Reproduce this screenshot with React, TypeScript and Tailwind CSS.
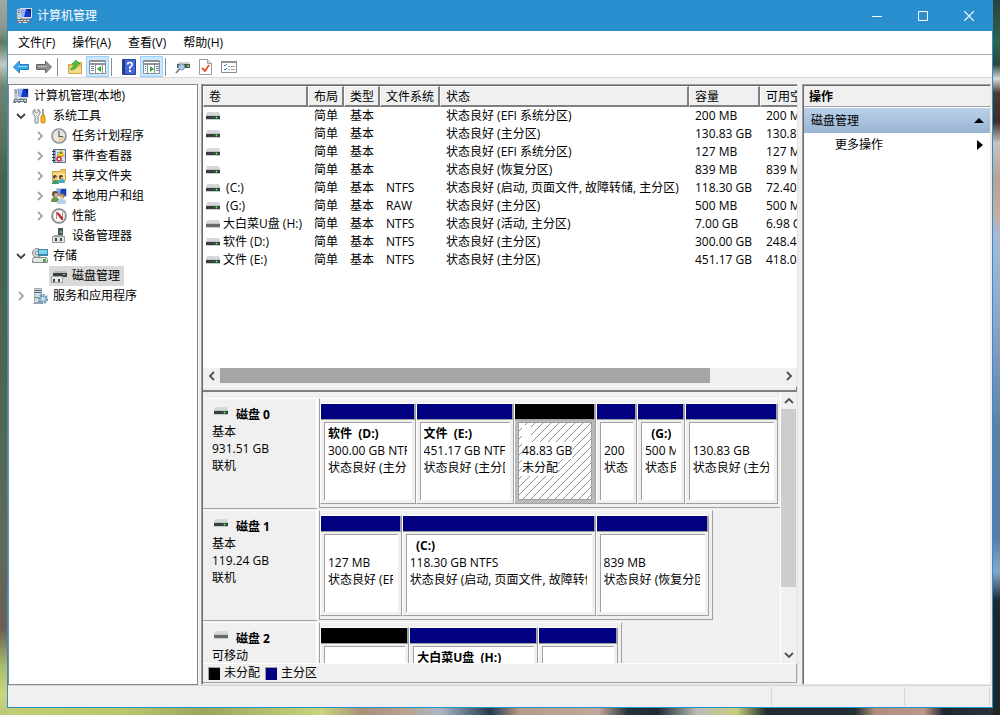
import type { ReactNode } from "react"
import clsx from "clsx"

type TreeNode = {
  label: string
  level: 0 | 1 | 2
  icon: ReactNode
  state?: "open" | "closed"
  selected?: boolean
}

type Volume = {
  name: string
  fs: string
  status: string
  capacity: string
  free: string
  removable?: boolean
}

type Partition = {
  weight: number
  name?: string
  size?: string
  status?: string
  unallocated?: boolean
  selected?: boolean
}

type Disk = {
  name: string
  lines: string[]
  share: number
  removable?: boolean
  partitions: Partition[]
}

/* ---------- icons ---------- */

function DiskIcon({ removable = false }: { removable?: boolean }) {
  return (
    <svg width="14" height="8" viewBox="0 0 14 8" className="shrink-0" aria-hidden="true">
      <path d="M1 0h12l1 3H0z" fill="#d6d9dc" />
      <path d="M0 3h14v1H0z" fill="#bfc3c7" />
      <path d="M0 4h14v3H0z" fill={removable ? "#6b696c" : "#3c3f42"} />
      <path d="M0 7h14v1H0z" fill="#c9ccd0" />
      {!removable && <path d="M9 5h3v1H9zM10 4h1v3h-1z" fill="#1fa32a" />}
      {!removable && <path d="M10 5h1v1h-1z" fill="#5dff5d" />}
    </svg>
  )
}

function ComputerIcon() {
  return (
    <svg width="16" height="16" viewBox="0 0 16 16" className="shrink-0" aria-hidden="true">
      <path d="M1 1h4v10H1z" fill="#c3c9cf" />
      <path d="M2 2h2v1H2zM2 4h2v1H2z" fill="#727b85" />
      <path d="M4 0h12v10H5z" fill="#dcdee0" />
      <path d="M5 1h10v8H6z" fill="#1738c8" />
      <path d="M5 1h5L8 9H6z" fill="#8fb2f8" />
      <path d="M11 1h4v5z" fill="#0b1c8c" />
      <path d="M6 10h8v1H6z" fill="#b4b8bc" />
      <path d="M1 11h13v4H0z" fill="#6e7d88" />
      <path d="M2 12h2v1H2zM5 12h2v1H5zM8 12h2v1H8zM11 12h2v1h-2zM3 14h2v1H3zM7 14h4v1H7z" fill="#e3e8ec" />
    </svg>
  )
}

function ToolsIcon() {
  return (
    <svg width="16" height="16" viewBox="0 0 16 16" className="shrink-0" aria-hidden="true">
      <path d="M3 1v3l1.500 1L6 4V1l2 2v3L6 8v7H3V8L1 6V3z" fill="#e4e6e8" stroke="#85898d" />
      <path d="M10 1h2v6h-2z" fill="#a2a6a9" />
      <path d="M9 9l1-2h2l1 2v5l-1 1h-2l-1-1z" fill="#f6b61f" stroke="#c48710" />
    </svg>
  )
}

function ClockIcon() {
  return (
    <svg width="16" height="16" viewBox="0 0 16 16" className="shrink-0" aria-hidden="true">
      <circle cx="8" cy="8" r="7" fill="#ece7da" stroke="#85888d" strokeWidth="1.600" />
      <path d="M8 8h6A6 6 0 0 1 8 14z" fill="#e8cd98" />
      <circle cx="8" cy="8" r="6" fill="none" stroke="#cfd1d4" />
      <path d="M8 3v5.500h4" fill="none" stroke="#4a5f80" strokeWidth="1.200" />
    </svg>
  )
}

function EventIcon() {
  return (
    <svg width="16" height="16" viewBox="0 0 16 16" className="shrink-0" aria-hidden="true">
      <path d="M2.500 1.500h12v13h-12z" fill="#8ca4c8" stroke="#566c8f" />
      <path d="M5 2h9v12H5z" fill="#d9e3f1" />
      <path d="M6 4.500h6M6 6.500h6M6 8.500h6M6 12.500h6" stroke="#8797b0" />
      <path d="M1 3.500h3M1 6.500h3M1 9.500h3M1 12.500h3" stroke="#26334a" />
      <path d="M10 2l3.500 6h-7z" fill="#ffd42b" stroke="#c99700" strokeWidth=".6" />
      <path d="M9.500 4h1v2h-1z" fill="#333" />
      <circle cx="8" cy="11" r="2.800" fill="#d63a30" />
      <path d="M7 10l2 2M9 10l-2 2" stroke="#fff" />
    </svg>
  )
}

function SharedFolderIcon() {
  return (
    <svg width="16" height="16" viewBox="0 0 16 16" className="shrink-0" aria-hidden="true">
      <path d="M1.500 3.500H8l2-2h4.500v11h-13z" fill="#ecc65e" stroke="#cfa546" />
      <path d="M2 5h12v7H2z" fill="#f8dd8d" />
      <circle cx="4" cy="9" r="2" fill="#4b3a28" />
      <circle cx="10" cy="9" r="2" fill="#4b3a28" />
      <circle cx="5" cy="10" r="1.300" fill="#e2b68c" />
      <circle cx="11" cy="10" r="1.300" fill="#e2b68c" />
      <path d="M1 16q0-4 3.500-4T8 16z" fill="#3f9e63" />
      <path d="M7 15q0-4 3.500-4t3.500 4z" fill="#4aa5c9" />
    </svg>
  )
}

function UsersIcon() {
  return (
    <svg width="16" height="16" viewBox="0 0 16 16" className="shrink-0" aria-hidden="true">
      <path d="M5 0h11v9H5z" fill="#cfd4da" />
      <path d="M6 1h9v7H6z" fill="#1b3fc4" />
      <path d="M6 1h4l-1 7H6z" fill="#7ca0f0" />
      <circle cx="4" cy="6" r="3" fill="#5d4b33" />
      <circle cx="5" cy="7" r="2" fill="#dfb088" />
      <path d="M0 14q0-5 4-5t5 5z" fill="#6a9755" />
      <circle cx="11" cy="8" r="2.500" fill="#a6812f" />
      <circle cx="10.500" cy="9" r="1.800" fill="#e9bf97" />
      <path d="M6 16q0-5 5-5t4 5z" fill="#b5d4ec" />
    </svg>
  )
}

function PerformanceIcon() {
  return (
    <svg width="16" height="16" viewBox="0 0 16 16" className="shrink-0" aria-hidden="true">
      <circle cx="8" cy="8" r="7" fill="#fff" stroke="#808589" strokeWidth="1.600" />
      <circle cx="8" cy="8" r="5.500" fill="none" stroke="#d8dbdd" />
      <path d="M5.500 11V5M11.500 11V4" fill="none" stroke="#8f9397" />
      <path d="M5 3.500l3 1.500 4 5v2h-1.500l-4-5z" fill="#d8202a" />
    </svg>
  )
}

function DeviceIcon() {
  return (
    <svg width="16" height="16" viewBox="0 0 16 16" className="shrink-0" aria-hidden="true">
      <path d="M7 0h5v8H7z" fill="#4f5356" />
      <path d="M9 3h2v2H9z" fill="#50d34f" />
      <path d="M3 7h9v2H3z" fill="#9da1a4" />
      <path d="M1.500 8.500h12v6h-12z" fill="#dfe1e3" stroke="#989c9f" />
      <path d="M4 10h2v3H4zM9 10h2v3H9z" fill="#44484b" />
    </svg>
  )
}

function StorageIcon() {
  return (
    <svg width="16" height="16" viewBox="0 0 16 16" className="shrink-0" aria-hidden="true">
      <circle cx="5" cy="5" r="4.500" fill="#ccd0d3" stroke="#8b8f93" />
      <circle cx="5" cy="5" r="1.500" fill="#fff" stroke="#8b8f93" />
      <path d="M6 1h10v7H6z" fill="#3f87ac" />
      <path d="M7 2h8v4H7z" fill="#7fd3ee" />
      <path d="M1.500 9.500h13l1 2v3H.5v-3z" fill="#e3e5e7" stroke="#85898d" />
      <path d="M11 11h3v3h-3z" fill="#35b53b" />
    </svg>
  )
}

function DiskManageIcon() {
  return (
    <svg width="16" height="16" viewBox="0 0 16 16" className="shrink-0" aria-hidden="true">
      <path d="M4 3h11l1 2H2z" fill="#b9bcbf" />
      <path d="M2 5h14v4H2z" fill="#3c4043" />
      <path d="M12 6h2v1h-2z" fill="#4cff4c" />
      <path d="M.5 8.500h11v6H.5z" fill="#ececed" stroke="#a4a7aa" />
      <path d="M2 11h2v3H2zM7 11h2v3H7z" fill="#44484b" />
    </svg>
  )
}

function ServicesIcon() {
  return (
    <svg width="16" height="16" viewBox="0 0 16 16" className="shrink-0" aria-hidden="true">
      <path d="M2.500.5h7v14h-7z" fill="#d3dce2" stroke="#9ba7b0" />
      <path d="M3 2.500h6M3 4.500h6" stroke="#54636e" />
      <path d="M3 9.500h3" stroke="#37a344" />
      <circle cx="11" cy="11" r="4" fill="none" stroke="#5f8fb5" strokeWidth="2" strokeDasharray="2 1" />
      <circle cx="11" cy="11" r="2.500" fill="#d4e5f2" stroke="#6b9bc0" />
      <path d="M1 15.500h8" stroke="#9aa4ab" />
    </svg>
  )
}

function ArrowIcon({ forward = false }: { forward?: boolean }) {
  return forward ? (
    <svg width="16" height="14" viewBox="0 0 16 14" aria-hidden="true">
      <path d="M15.500 7L9.500 1v3.500H.5v5h9V13z" fill="#8f8f8f" stroke="#666" />
      <path d="M2 6.500h9" stroke="#b9b9b9" />
    </svg>
  ) : (
    <svg width="16" height="14" viewBox="0 0 16 14" aria-hidden="true">
      <path d="M.5 7l6-6v3.500h9v5h-9V13z" fill="#38a9ec" stroke="#2678b8" />
      <path d="M5 6.500h9" stroke="#8fd5fb" />
    </svg>
  )
}

function UpFolderIcon() {
  return (
    <svg width="16" height="16" viewBox="0 0 16 16" aria-hidden="true">
      <path d="M1.500 5.500H6l2-2h6.500v11h-13z" fill="#e8bf5c" stroke="#cfa546" />
      <path d="M2 8h12v6H2z" fill="#f6d88c" />
      <path d="M3 10q3 0 4-5H5l4-4 4 4h-2q-1 5-6 6z" fill="#4fc13f" stroke="#32922b" strokeWidth=".6" />
    </svg>
  )
}

function PaneIcon({ right = false }: { right?: boolean }) {
  return (
    <svg width="17" height="14" viewBox="0 0 17 14" aria-hidden="true">
      <path d="M.5.5h16v13H.5z" fill="#fff" stroke="#8b8f93" />
      <path d="M1 1h15v1H1zM1 3h15v2H1z" fill="#8f9396" />
      <path d="M1 2h10v1H1zM12 2h1v1h-1zM14 2h1v1h-1z" fill="#fff" />
      {right ? (
        <>
          <path d="M4.500 4v9M11.500 4v9" stroke="#8f9396" />
          <path d="M13 6.500h3M13 8.500h3M13 10.500h3M2 6.500h1M2 8.500h1M2 10.500h1" stroke="#5a7ea6" />
          <path d="M7 6l4 3-4 3z" fill="#2fa83a" />
        </>
      ) : (
        <>
          <path d="M6.500 4v9M13.500 4v9" stroke="#8f9396" />
          <path d="M2 6.500h3M2 8.500h3M2 10.500h3" stroke="#5a7ea6" />
          <path d="M12 6L8 9l4 3z" fill="#2fa83a" />
        </>
      )}
    </svg>
  )
}

function HelpIcon() {
  return (
    <svg width="14" height="16" viewBox="0 0 14 16" aria-hidden="true">
      <path d="M.5.5h13v15H.5z" fill="#4468d6" stroke="#2a409a" />
      <path d="M1 1h2v14H1z" fill="#21398f" />
      <path d="M5.500 5.500q0-2 2.300-2t2.300 2q0 1.200-1.300 2T7.800 10" fill="none" stroke="#fff" strokeWidth="1.600" />
      <path d="M7 11h2v2H7z" fill="#fff" />
    </svg>
  )
}

function RescanIcon() {
  return (
    <svg width="16" height="14" viewBox="0 0 16 14" aria-hidden="true">
      <path d="M4 2h10l1 2H2z" fill="#cfd2d5" />
      <path d="M2 4h13v4H2z" fill="#505457" />
      <path d="M12 5h2v2h-2z" fill="#43e04a" />
      <circle cx="6.500" cy="7" r="3" fill="#a8cde6" stroke="#7f9bb0" />
      <path d="M4.500 9L1 13" stroke="#737a80" strokeWidth="1.800" />
    </svg>
  )
}

function CheckPageIcon() {
  return (
    <svg width="13" height="16" viewBox="0 0 13 16" aria-hidden="true">
      <path d="M.5.5h8l4 4v11H.5z" fill="#fff" stroke="#9a9c9e" />
      <path d="M8.500.5v4h4" fill="#e4e4e4" stroke="#9a9c9e" />
      <path d="M3 9l3 3 4-6" fill="none" stroke="#e8541e" strokeWidth="1.800" />
    </svg>
  )
}

function ListPageIcon() {
  return (
    <svg width="16" height="12" viewBox="0 0 16 12" aria-hidden="true">
      <path d="M.5.5h15v11H.5z" fill="#fff" stroke="#8b8f92" />
      <path d="M0 0h16v2H0z" fill="#8f9396" />
      <path d="M3 4l1 1 2-2M3 8l1 1 2-2" fill="none" stroke="#2f8fdb" />
      <path d="M7 5.500h2M10 5.500h4M7 8.500h2M10 8.500h4" stroke="#9b9ea1" />
    </svg>
  )
}

function Chevron({ dir, className }: { dir: "up" | "down" | "left" | "right"; className?: string }) {
  const paths = {
    up: "M1 7l4-4 4 4",
    down: "M1 3l4 4 4-4",
    left: "M7 1L3 5l4 4",
    right: "M3 1l4 4-4 4",
  }
  return (
    <svg width="10" height="10" viewBox="0 0 10 10" className={className} aria-hidden="true">
      <path d={paths[dir]} fill="none" stroke="currentColor" strokeWidth="1.800" />
    </svg>
  )
}

/* ---------- data ---------- */

const menus = ["文件(F)", "操作(A)", "查看(V)", "帮助(H)"]

const tree: TreeNode[] = [
  { label: "计算机管理(本地)", level: 0, icon: <ComputerIcon /> },
  { label: "系统工具", level: 1, icon: <ToolsIcon />, state: "open" },
  { label: "任务计划程序", level: 2, icon: <ClockIcon />, state: "closed" },
  { label: "事件查看器", level: 2, icon: <EventIcon />, state: "closed" },
  { label: "共享文件夹", level: 2, icon: <SharedFolderIcon />, state: "closed" },
  { label: "本地用户和组", level: 2, icon: <UsersIcon />, state: "closed" },
  { label: "性能", level: 2, icon: <PerformanceIcon />, state: "closed" },
  { label: "设备管理器", level: 2, icon: <DeviceIcon /> },
  { label: "存储", level: 1, icon: <StorageIcon />, state: "open" },
  { label: "磁盘管理", level: 2, icon: <DiskManageIcon />, selected: true },
  { label: "服务和应用程序", level: 1, icon: <ServicesIcon />, state: "closed" },
]

const columns = ["卷", "布局", "类型", "文件系统", "状态", "容量", "可用空间"]

const volumes: Volume[] = [
  { name: "", fs: "", status: "状态良好 (EFI 系统分区)", capacity: "200 MB", free: "200 MB" },
  { name: "", fs: "", status: "状态良好 (主分区)", capacity: "130.83 GB", free: "130.83 GB" },
  { name: "", fs: "", status: "状态良好 (EFI 系统分区)", capacity: "127 MB", free: "127 MB" },
  { name: "", fs: "", status: "状态良好 (恢复分区)", capacity: "839 MB", free: "839 MB" },
  { name: " (C:)", fs: "NTFS", status: "状态良好 (启动, 页面文件, 故障转储, 主分区)", capacity: "118.30 GB", free: "72.40 GB" },
  { name: " (G:)", fs: "RAW", status: "状态良好 (主分区)", capacity: "500 MB", free: "500 MB" },
  { name: "大白菜U盘 (H:)", fs: "NTFS", status: "状态良好 (活动, 主分区)", capacity: "7.00 GB", free: "6.98 GB", removable: true },
  { name: "软件 (D:)", fs: "NTFS", status: "状态良好 (主分区)", capacity: "300.00 GB", free: "248.4 GB" },
  { name: "文件 (E:)", fs: "NTFS", status: "状态良好 (主分区)", capacity: "451.17 GB", free: "418.0 GB" },
]

// share is the width of a disk's strip in percent; the largest disk runs just past the scroll edge
const disks: Disk[] = [
  {
    name: "磁盘 0",
    lines: ["基本", "931.51 GB", "联机"],
    share: 100.5,
    partitions: [
      { weight: 96, name: "软件  (D:)", size: "300.00 GB NTFS", status: "状态良好 (主分区)" },
      { weight: 99, name: "文件  (E:)", size: "451.17 GB NTFS", status: "状态良好 (主分区)" },
      { weight: 82, name: "   ", size: "48.83 GB", status: "未分配", unallocated: true, selected: true },
      { weight: 40, size: "200 MB", status: "状态良好" },
      { weight: 47, name: "  (G:)", size: "500 MB", status: "状态良好 (主分区)" },
      { weight: 94, size: "130.83 GB", status: "状态良好 (主分区)" },
    ],
  },
  {
    name: "磁盘 1",
    lines: ["基本", "119.24 GB", "联机"],
    share: 85.4,
    partitions: [
      { weight: 81, size: "127 MB", status: "状态良好 (EFI 系统分区)" },
      { weight: 195, name: "  (C:)", size: "118.30 GB NTFS", status: "状态良好 (启动, 页面文件, 故障转储, 主分区)" },
      { weight: 113, size: "839 MB", status: "状态良好 (恢复分区)" },
    ],
  },
  {
    name: "磁盘 2",
    lines: ["可移动", "7.20 GB", "联机"],
    share: 65.7,
    removable: true,
    partitions: [
      { weight: 89, unallocated: true },
      { weight: 129, name: "大白菜U盘  (H:)", size: "7.00 GB NTFS", status: "状态良好 (活动, 主分区)" },
      { weight: 80 },
    ],
  },
]

/* ---------- window parts ---------- */

function TitleBar() {
  return (
    <header className="flex h-[31px] shrink-0 items-center bg-[#2a8fcf] pl-2 text-white">
      <ComputerIcon />
      <h1 className="ml-[5px] flex-1">计算机管理</h1>
      <button type="button" aria-label="最小化" className="flex h-full w-[46px] items-center justify-center">
        <svg width="10" height="10" viewBox="0 0 10 10">
          <path d="M0 5.500h10" stroke="#fff" />
        </svg>
      </button>
      <button type="button" aria-label="最大化" className="flex h-full w-[46px] items-center justify-center">
        <svg width="10" height="10" viewBox="0 0 10 10">
          <path d="M.5.5h9v9h-9z" fill="none" stroke="#fff" />
        </svg>
      </button>
      <button type="button" aria-label="关闭" className="flex h-full w-[46px] items-center justify-center">
        <svg width="10" height="10" viewBox="0 0 10 10">
          <path d="M0 0l10 10M10 0L0 10" stroke="#fff" strokeWidth="1.200" />
        </svg>
      </button>
    </header>
  )
}

function MenuBar() {
  return (
    <nav className="flex h-6 shrink-0 items-center gap-[17px] border-b border-[#a9a9a9] bg-white px-[10px]">
      {menus.map((menu) => (
        <button key={menu} type="button">
          {menu}
        </button>
      ))}
    </nav>
  )
}

function ToolButton({ label, active, children }: { label: string; active?: boolean; children: ReactNode }) {
  return (
    <button
      type="button"
      aria-label={label}
      className={clsx(
        "flex h-[21px] w-[23px] items-center justify-center border",
        active ? "border-[#99d1ff] bg-[#cce8ff]" : "border-transparent"
      )}
    >
      {children}
    </button>
  )
}

function ToolSeparator() {
  return <div className="ml-[2px] mr-[5px] h-[18px] w-px bg-[#8d8d8d]" />
}

function ToolBar() {
  return (
    <div className="flex h-[23px] shrink-0 items-center border-b border-[#d7d7d7] bg-white pl-px pt-px">
      <ToolButton label="后退">
        <ArrowIcon />
      </ToolButton>
      <ToolButton label="前进">
        <ArrowIcon forward />
      </ToolButton>
      <ToolSeparator />
      <ToolButton label="向上一级">
        <UpFolderIcon />
      </ToolButton>
      <ToolButton label="显示/隐藏控制台树" active>
        <PaneIcon />
      </ToolButton>
      <ToolSeparator />
      <ToolButton label="帮助">
        <HelpIcon />
      </ToolButton>
      <ToolButton label="显示/隐藏操作窗格" active>
        <PaneIcon right />
      </ToolButton>
      <ToolSeparator />
      <ToolButton label="重新扫描磁盘">
        <RescanIcon />
      </ToolButton>
      <ToolButton label="属性">
        <CheckPageIcon />
      </ToolButton>
      <ToolButton label="设置">
        <ListPageIcon />
      </ToolButton>
    </div>
  )
}

function ConsoleTree() {
  return (
    <aside className="w-[190px] shrink-0 border border-[#828790] bg-white pt-px">
      <ul>
        {tree.map((node) => (
          <li
            key={node.label}
            className={clsx(
              "flex h-5",
              node.level === 0 && "pl-[2px]",
              node.level === 1 && "pl-[3px]",
              node.level === 2 && "pl-[22px]"
            )}
          >
            {node.level > 0 && (
              <span className="flex w-[18px] items-center justify-center">
                {node.state === "open" && <Chevron dir="down" className="text-[#404040]" />}
                {node.state === "closed" && <Chevron dir="right" className="text-[#a6a6a6]" />}
              </span>
            )}
            <button
              type="button"
              className={clsx("flex items-center gap-[5px] pl-[2px] pr-1", node.selected && "bg-[#d9d9d9]")}
            >
              {node.icon}
              <span>{node.label}</span>
            </button>
          </li>
        ))}
      </ul>
    </aside>
  )
}

function VolumeList() {
  return (
    <section className="flex min-h-0 flex-[308_1_0] flex-col border-t border-[#a0a0a0]">
      <div className="min-h-0 flex-1 overflow-hidden border-t border-[#696969] bg-white">
        <table className="w-[681px] table-fixed border-collapse whitespace-pre text-left">
          <colgroup>
            <col className="w-[105px]" />
            <col className="w-9" />
            <col className="w-9" />
            <col className="w-[60px]" />
            <col className="w-[249px]" />
            <col className="w-[71px]" />
            <col />
          </colgroup>
          <thead>
            <tr>
              {columns.map((column) => (
                <th key={column} className="p-0 font-normal">
                  <div className="h-[21px] border-b-2 border-l border-r-2 border-t border-b-[#808080] border-l-white border-r-[#808080] border-t-white bg-[#f0f0f0] pl-[5px] leading-[19px]">
                    {column}
                  </div>
                </th>
              ))}
            </tr>
          </thead>
          <tbody>
            {volumes.map((volume, index) => (
              <tr key={index} className="h-[18px] leading-[18px]">
                <td className="p-0">
                  <div className="flex h-[18px] items-center gap-[3px] pl-[3px]">
                    <DiskIcon removable={volume.removable} />
                    <span>{volume.name}</span>
                  </div>
                </td>
                <td className="p-0 pl-[6px]">简单</td>
                <td className="p-0 pl-[6px]">基本</td>
                <td className="p-0 pl-[6px]">{volume.fs}</td>
                <td className="p-0 pl-[6px]">{volume.status}</td>
                <td className="p-0 pl-[6px]">{volume.capacity}</td>
                <td className="p-0 pl-[6px]">{volume.free}</td>
              </tr>
            ))}
          </tbody>
        </table>
      </div>
      <div className="flex h-[15px] shrink-0 bg-[#f0f0f0] text-[#505050]">
        <button type="button" aria-label="向左滚动" className="flex w-[17px] items-center justify-center">
          <Chevron dir="left" />
        </button>
        <div className="flex-1">
          <div className="h-full w-[87.5%] bg-[#a6a6a6]" />
        </div>
        <button type="button" aria-label="向右滚动" className="flex w-[17px] items-center justify-center">
          <Chevron dir="right" />
        </button>
      </div>
      <div className="mt-[3px] h-[6px] shrink-0 border-b-2 border-r border-t border-b-[#808080] border-r-[#808080] border-t-white bg-[#ececec]" />
    </section>
  )
}

function Hatch() {
  return (
    <svg className="absolute inset-0 h-full w-full" aria-hidden="true">
      <defs>
        <pattern id="hatch" width="8" height="8" patternUnits="userSpaceOnUse">
          <path d="M-1 9L9-1M-1 1L1-1M7 9L9 7" stroke="#909090" strokeWidth="1" />
        </pattern>
      </defs>
      <rect width="100%" height="100%" fill="url(#hatch)" />
    </svg>
  )
}

function PartitionBlock({ part }: { part: Partition }) {
  return (
    <div
      className="flex min-w-0 flex-col border-b border-l border-r border-t border-b-[#a0a0a0] border-l-white border-r-[#a0a0a0] border-t-white"
      style={{ flex: `${part.weight} 1 0px` }}
    >
      <div
        className={clsx(
          "h-4 shrink-0 border-b border-r border-[#a0a0a0]",
          part.unallocated ? "bg-black" : "bg-[#000080]"
        )}
      />
      <div className={clsx("h-[83px] px-[3px] pb-[3px] pt-[2px]", part.selected && "bg-[#b9b9b9]")}>
        <div
          className={clsx(
            "relative h-full overflow-hidden border-l border-t border-[#a0a0a0] bg-white pl-[3px] pr-[5px] pt-[2px]",
            part.selected && "border-b border-r"
          )}
        >
          {part.selected && <Hatch />}
          <div className="relative overflow-hidden whitespace-pre leading-[17px]">
            <p className="h-[17px] font-bold">
              <span className="bg-white">{part.name}</span>
            </p>
            <p>
              <span className="bg-white">{part.size}</span>
            </p>
            <p>
              <span className="bg-white">{part.status}</span>
            </p>
          </div>
        </div>
      </div>
    </div>
  )
}

function DiskRow({ disk }: { disk: Disk }) {
  return (
    <div className="flex h-28 shrink-0">
      <div className="h-[111px] w-[115px] shrink-0 border-b border-r-2 border-t border-b-[#a0a0a0] border-r-white border-t-white pl-[9px] pt-[7px] leading-[17px]">
        <div className="flex gap-2 pl-[2px]">
          <span className="pt-px">
            <DiskIcon removable={disk.removable} />
          </span>
          <h2 className="font-bold">{disk.name}</h2>
        </div>
        {disk.lines.map((line) => (
          <p key={line}>{line}</p>
        ))}
      </div>
      <div className="ml-px min-w-0 flex-1">
        <div
          className="flex h-[110px] border border-[#a0a0a0] border-t-white pb-[3px] pr-[3px] pt-1"
          style={{ width: `${disk.share}%` }}
        >
          {disk.partitions.map((part, index) => (
            <PartitionBlock key={index} part={part} />
          ))}
        </div>
      </div>
    </div>
  )
}

function Legend() {
  const items = [
    { label: "未分配", color: "bg-black" },
    { label: "主分区", color: "bg-[#000080]" },
  ]
  return (
    <div className="mb-px flex h-5 shrink-0 items-center gap-[5px] border-b border-r border-t border-b-[#a0a0a0] border-r-[#a0a0a0] border-t-white pl-[5px]">
      {items.map((item) => (
        <div key={item.label} className="flex items-center gap-1">
          <span className={clsx("h-[13px] w-3 border-l border-t border-[#a0a0a0]", item.color)} />
          <span>{item.label}</span>
        </div>
      ))}
    </div>
  )
}

function DiskMap() {
  return (
    <section className="flex min-h-0 flex-[292_1_0] flex-col">
      <div className="flex min-h-0 flex-1">
        <div className="flex min-w-0 flex-1 flex-col overflow-hidden pt-[6px]">
          {disks.map((disk) => (
            <DiskRow key={disk.name} disk={disk} />
          ))}
        </div>
        <div className="mr-px flex w-4 shrink-0 flex-col border-l border-white text-[#505050]">
          <button type="button" aria-label="向上滚动" className="flex h-[17px] items-center justify-center">
            <Chevron dir="up" />
          </button>
          <div className="flex-1">
            <div className="h-3/4 bg-[#cdcdcd]" />
          </div>
          <button type="button" aria-label="向下滚动" className="flex h-[17px] items-center justify-center">
            <Chevron dir="down" />
          </button>
        </div>
      </div>
      <Legend />
    </section>
  )
}

function ActionsPane() {
  return (
    <aside className="ml-px flex w-[189px] shrink-0 flex-col border border-b-[#e3e3e3] border-l-[#a0a0a0] border-r-[#e3e3e3] border-t-[#a0a0a0] bg-white">
      <div className="flex-1 border-l border-t border-[#696969]">
        <h2 className="h-[21px] border-b border-[#a0a0a0] bg-[#f0f0f0] pl-[5px] font-bold leading-[21px]">操作</h2>
        <button
          type="button"
          className="mt-px flex h-[25px] w-full items-center justify-between bg-linear-to-b from-[#b9d1ea] to-[#99b4d1] pl-[7px] pr-[6px]"
        >
          <span>磁盘管理</span>
          <svg width="10" height="5" viewBox="0 0 10 5" aria-hidden="true">
            <path d="M0 5l5-5 5 5z" />
          </svg>
        </button>
        <button type="button" className="flex h-6 w-full items-center justify-between pl-[31px] pr-[7px]">
          <span>更多操作</span>
          <svg width="6" height="10" viewBox="0 0 6 10" aria-hidden="true">
            <path d="M0 0l6 5-6 5z" />
          </svg>
        </button>
      </div>
    </aside>
  )
}

function StatusBar() {
  return (
    <footer className="flex h-[22px] shrink-0 border-t border-[#d7d7d7] pb-px pt-px">
      <div className="flex-1 border-r border-[#d7d7d7]" />
      <div className="w-[133px] border-r border-[#d7d7d7]" />
      <div className="mr-[2px] w-[85px] border-r border-[#d7d7d7]" />
    </footer>
  )
}

export default function App() {
  return (
    <div className="flex h-screen font-['Open_Sans','Noto_Sans_CJK_SC',sans-serif] text-xs text-black">
      {/* desktop wallpaper shows on three sides of the window */}
      <div className="w-[7px] shrink-0 bg-[linear-gradient(180deg,#a3aaa0_0%,#8c978c_4%,#5e7a62_6%,#c3c9c0_9%,#6f8571_12%,#48614f_25%,#4c6450_50%,#5f6a58_75%,#6b5f52_88%,#a9b96a_93%,#cdd67c_97%,#b9c97a_100%)]" />
      <div className="flex min-w-0 flex-1 flex-col">
        <main className="flex min-h-0 flex-1 flex-col border-x border-b border-[#2a8fcf] bg-[#f0f0f0]">
          <TitleBar />
          <MenuBar />
          <ToolBar />
          <div className="flex min-h-0 flex-1 gap-[3px] pr-px pt-[6px]">
            <ConsoleTree />
            <div className="flex min-w-0 flex-1 border-b border-l border-r border-b-[#e3e3e3] border-l-[#a0a0a0] border-r-[#e3e3e3]">
              <div className="flex min-w-0 flex-1 flex-col border-l border-[#696969]">
                <VolumeList />
                <DiskMap />
              </div>
            </div>
            <ActionsPane />
          </div>
          <StatusBar />
        </main>
        <div className="h-[7px] shrink-0 bg-[linear-gradient(90deg,#c3cc70_0%,#b9c76a_12%,#9aa55c_20%,#c8d37c_32%,#a98f7a_36%,#b9a08c_40%,#a9b7c4_44%,#26394c_49%,#b59b8c_52%,#c0a79a_60%,#25333c_63%,#1f2c33_66%,#b9bdb4_70%,#c9cc7c_74%,#1f2c30_77%,#232f34_86%,#b08c7c_88%,#b9998a_93%,#20282e_95%,#2a333a_100%)]" />
      </div>
      <div className="w-[7px] shrink-0 bg-[linear-gradient(180deg,#2b3f3c_0%,#2f6650_6%,#2a4640_9%,#dcdad8_11%,#4a3a34_13%,#3a2d2a_17%,#c9c2c0_20%,#b9a296_25%,#c4aca0_30%,#a9b9d6_33%,#8fa5c8_45%,#5f7fa8_60%,#5a7ba6_75%,#86a6cc_80%,#20282e_84%,#1f272b_100%)]" />
    </div>
  )
}
